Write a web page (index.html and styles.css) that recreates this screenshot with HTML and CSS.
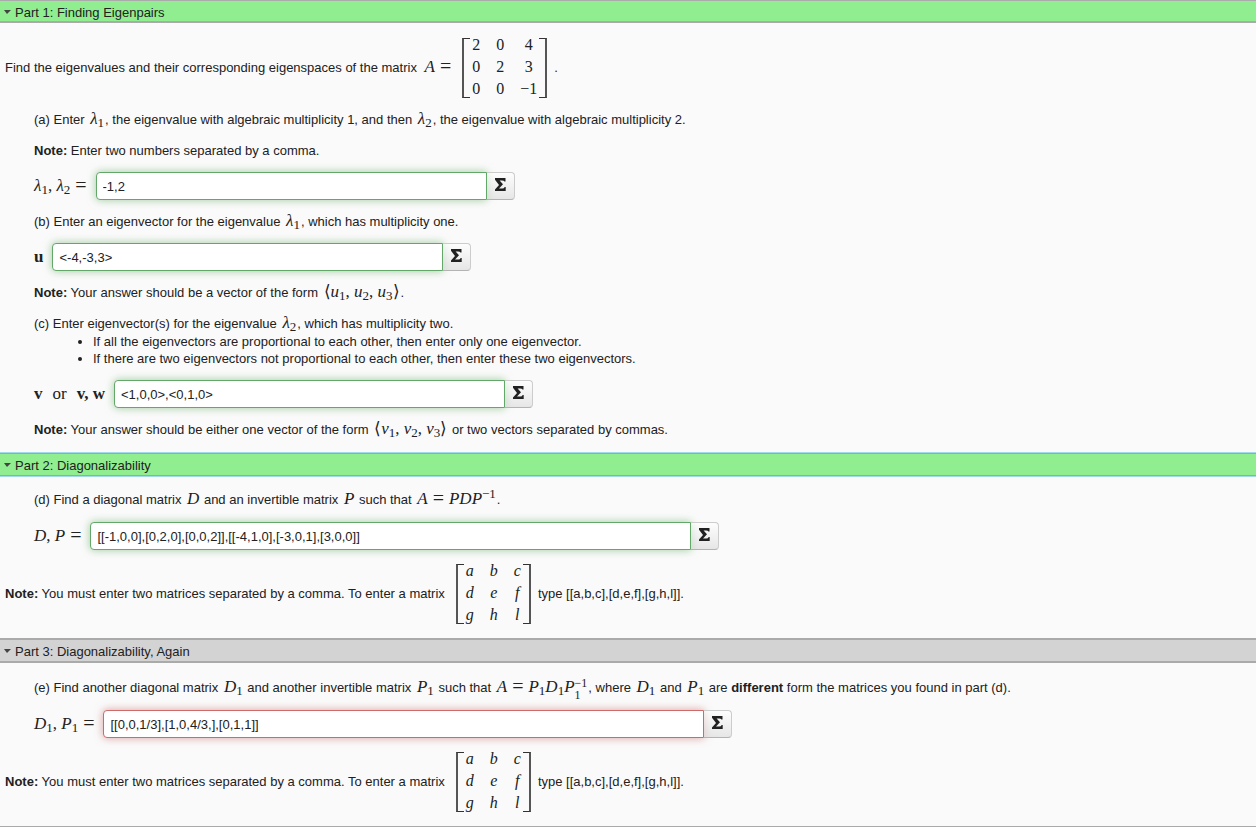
FILE: index.html
```html
<!DOCTYPE html>
<html lang="en">
<head>
    <meta charset="UTF-8">
    <title>Eigenpairs and Diagonalizability</title>
    <link rel="stylesheet" href="styles.css">
</head>
<body>
    <svg width="0" height="0" class="defs">
        <symbol id="sigma" viewBox="0 0 11 13">
            <path d="M0 0H10.5V3.6H9.5Q9 2.4 7 2.4H4.6L8 6.3L4 10.5H7.2Q9.2 10.5 9.7 9H10.7V13H0V11.4L4 6.9L0 1.8Z"/>
        </symbol>
    </svg>

    <details class="part correct" open>
        <summary>Part 1: Finding Eigenpairs</summary>
        <div class="content first">
            <div class="matrix-line">
                <span class="text">Find the eigenvalues and their corresponding eigenspaces of the matrix <span class="math"><i>A</i><span class="rel">=</span></span></span>
                <span class="matrix numbers">
                    <span>2</span><span>0</span><span>4</span>
                    <span>0</span><span>2</span><span>3</span>
                    <span>0</span><span>0</span><span>−1</span>
                </span>
                <span class="text">.</span>
            </div>
            <p class="step formula">(a) Enter <span class="math"><i>λ</i><sub>1</sub></span>, the eigenvalue with algebraic multiplicity 1, and then <span class="math"><i>λ</i><sub>2</sub></span>, the eigenvalue with algebraic multiplicity 2.</p>
            <p class="step"><b>Note:</b> Enter two numbers separated by a comma.</p>
            <div class="step answer">
                <label class="math" for="ans1"><i>λ</i><sub>1</sub>, <i>λ</i><sub>2</sub><span class="rel">=</span></label>
                <input type="text" id="ans1" value="-1,2">
                <button type="button" aria-label="Equation editor"><svg><use href="#sigma"/></svg></button>
            </div>
            <p class="step">(b) Enter an eigenvector for the eigenvalue <span class="math"><i>λ</i><sub>1</sub></span>, which has multiplicity one.</p>
            <div class="step answer">
                <label class="math" for="ans2"><b>u</b></label>
                <input type="text" id="ans2" value="&lt;-4,-3,3&gt;">
                <button type="button" aria-label="Equation editor"><svg><use href="#sigma"/></svg></button>
            </div>
            <p class="step formula"><b>Note:</b> Your answer should be a vector of the form <span class="math">⟨<i>u</i><sub>1</sub>, <i>u</i><sub>2</sub>, <i>u</i><sub>3</sub>⟩</span>.</p>
            <div class="step">
                <p class="formula">(c) Enter eigenvector(s) for the eigenvalue <span class="math"><i>λ</i><sub>2</sub></span>, which has multiplicity two.</p>
                <ul>
                    <li>If all the eigenvectors are proportional to each other, then enter only one eigenvector.</li>
                    <li>If there are two eigenvectors not proportional to each other, then enter these two eigenvectors.</li>
                </ul>
            </div>
            <div class="step answer">
                <label class="math" for="ans3"><b>v</b><span class="word">or</span><b>v, w</b></label>
                <input type="text" id="ans3" value="&lt;1,0,0&gt;,&lt;0,1,0&gt;">
                <button type="button" aria-label="Equation editor"><svg><use href="#sigma"/></svg></button>
            </div>
            <p class="step formula"><b>Note:</b> Your answer should be either one vector of the form <span class="math">⟨<i>v</i><sub>1</sub>, <i>v</i><sub>2</sub>, <i>v</i><sub>3</sub>⟩</span> or two vectors separated by commas.</p>
        </div>
    </details>

    <details class="part correct active" open>
        <summary>Part 2: Diagonalizability</summary>
        <div class="content">
            <p class="step">(d) Find a diagonal matrix <span class="math"><i>D</i></span> and an invertible matrix <span class="math"><i>P</i></span> such that <span class="math"><i>A</i><span class="rel">=</span><i>PDP</i><sup>−1</sup></span>.</p>
            <div class="step answer wide">
                <label class="math" for="ans4"><i>D</i>, <i>P</i><span class="rel">=</span></label>
                <input type="text" id="ans4" value="[[-1,0,0],[0,2,0],[0,0,2]],[[-4,1,0],[-3,0,1],[3,0,0]]">
                <button type="button" aria-label="Equation editor"><svg><use href="#sigma"/></svg></button>
            </div>
            <div class="matrix-line">
                <span class="text"><b>Note:</b> You must enter two matrices separated by a comma. To enter a matrix</span>
                <span class="matrix letters">
                    <i>a</i><i>b</i><i>c</i>
                    <i>d</i><i>e</i><i>f</i>
                    <i>g</i><i>h</i><i>l</i>
                </span>
                <span class="text">type [[a,b,c],[d,e,f],[g,h,l]].</span>
            </div>
        </div>
    </details>

    <details class="part" open>
        <summary>Part 3: Diagonalizability, Again</summary>
        <div class="content">
            <p class="step">(e) Find another diagonal matrix <span class="math"><i>D</i><sub>1</sub></span> and another invertible matrix <span class="math"><i>P</i><sub>1</sub></span> such that <span class="math"><i>A</i><span class="rel">=</span><i>P</i><sub>1</sub><i>D</i><sub>1</sub><i>P</i><span class="scripts"><span>−1</span><span>1</span></span></span>, where <span class="math"><i>D</i><sub>1</sub></span> and <span class="math"><i>P</i><sub>1</sub></span> are <b>different</b> form the matrices you found in part (d).</p>
            <div class="step answer wide wrong">
                <label class="math" for="ans5"><i>D</i><sub>1</sub>, <i>P</i><sub>1</sub><span class="rel">=</span></label>
                <input type="text" id="ans5" value="[[0,0,1/3],[1,0,4/3,],[0,1,1]]">
                <button type="button" aria-label="Equation editor"><svg><use href="#sigma"/></svg></button>
            </div>
            <div class="matrix-line">
                <span class="text"><b>Note:</b> You must enter two matrices separated by a comma. To enter a matrix</span>
                <span class="matrix letters">
                    <i>a</i><i>b</i><i>c</i>
                    <i>d</i><i>e</i><i>f</i>
                    <i>g</i><i>h</i><i>l</i>
                </span>
                <span class="text">type [[a,b,c],[d,e,f],[g,h,l]].</span>
            </div>
        </div>
    </details>
</body>
</html>
```
FILE: styles.css
```css
* {
    box-sizing: border-box;
}
body {
    margin: 0;
    font-family: "Liberation Sans", Arial, sans-serif;
    font-size: 13px;
    line-height: 17px;
    color: #212121;
    background: #fafafa;
}
p, ul {
    margin: 0;
}
.defs {
    display: block;
}

/* collapsible parts */
.part:last-of-type {
    border-bottom: 1px solid #aaa;
}
summary {
    display: flex;
    align-items: center;
    gap: 4px;
    height: 25px;
    padding: 1px 4px 0;
    list-style: none;
    background: #d3d3d3;
    border: solid #aaa;
    border-width: 2px 0;
    cursor: pointer;
}
summary::before {
    content: "";
    border: solid transparent;
    border-width: 4px 4px 0 3px;
    border-top-color: #444;
}
.correct summary {
    background: #90ee90;
}
.part:first-of-type summary {
    height: 23px;
    padding-top: 2px;
    border-top-width: 1px;
}
.active summary {
    border-width: 1px 0;
    border-color: #a4d8ec;
    box-shadow: inset 0 1px #9aaa9f, inset 0 -1px #9aaa9f;
}
.content {
    display: flex;
    flex-direction: column;
    gap: 14px;
    padding: 14px 5px;
}
.content.first {
    gap: 13px;
    padding: 15px 5px 13px;
}
.step {
    margin-left: 29px;
}
.formula {
    line-height: 18px;
}
ul {
    padding-left: 59px;
}

/* math */
.math, .matrix {
    font-family: "Liberation Serif", "Times New Roman", serif;
    font-size: 17px;
    line-height: 0;
    white-space: nowrap;
}
p .math {
    margin: 0 1px 0 2px;
}
.matrix-line .math {
    margin-left: 4px;
}
.rel {
    margin-left: 5px;
    font-size: 20px;
    line-height: 0;
    vertical-align: -1px;
}
p .rel {
    margin-right: 5px;
}
.word {
    margin: 0 10px;
}
sub, sup {
    font-size: 13px;
    line-height: 0;
}
sub {
    vertical-align: -3px;
}
sup {
    vertical-align: 6px;
}
.scripts {
    display: inline-grid;
    grid-auto-rows: 12px;
    height: 12px;
    font-size: 12px;
    line-height: 12px;
    vertical-align: 5px;
}
.matrix-line {
    display: flex;
    align-items: center;
    gap: 7px;
}
.matrix-line .text {
    padding-bottom: 2px;
}
.matrix {
    position: relative;
    display: grid;
    grid-template-columns: repeat(3, auto);
    grid-auto-rows: 22px;
    column-gap: 16px;
    height: 60px;
    margin-left: 4px;
    padding: 0 10px;
    font-size: 16px;
    line-height: 20px;
    align-content: center;
    justify-items: center;
}
.matrix::before,
.matrix::after {
    content: "";
    position: absolute;
    top: 0;
    bottom: 0;
    width: 6px;
    border: 1px solid #333;
}
.matrix::before {
    left: 0;
    border-left: 2px solid #555;
    border-right: 0;
}
.matrix::after {
    right: 0;
    border-left: 0;
    border-right: 2px solid #555;
}

/* answer boxes */
.answer {
    display: flex;
    align-items: center;
    height: 28px;
}
.answer label {
    margin-right: 9px;
    line-height: 20px;
}
.answer input {
    width: 391px;
    height: 28px;
    padding: 0 6px;
    font: inherit;
    color: #212121;
    background: #fff;
    border: 1px solid #63a869;
    border-radius: 4px 0 0 4px;
    box-shadow: 0 0 8px rgba(81, 163, 81, 0.55);
    outline: none;
}
.answer.wide input {
    width: 601px;
}
.answer.wrong input {
    border-color: #cf6a6a;
    box-shadow: 0 0 8px rgba(191, 84, 84, 0.55);
}
.answer button {
    width: 28px;
    height: 28px;
    padding: 0 0 4px;
    line-height: 1px;
    background: linear-gradient(rgba(255, 255, 255, 0.6), rgba(217, 217, 217, 0.6));
    border: 1px solid #ccc;
    border-left: 0;
    border-bottom-color: #b3b3b3;
    border-radius: 0 4px 4px 0;
    cursor: pointer;
}
.answer svg {
    width: 11px;
    height: 13px;
    fill: #212121;
}
```
